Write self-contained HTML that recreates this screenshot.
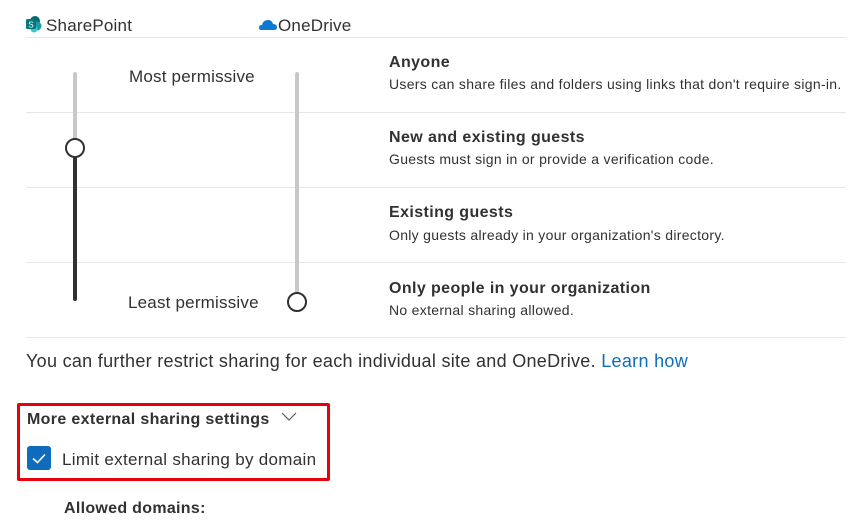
<!DOCTYPE html><html><head><style>
body{margin:0;width:860px;height:520px;background:#fff;font-family:"Liberation Sans",sans-serif;color:#323130;position:relative;overflow:hidden}
.a{position:absolute;white-space:nowrap}
.hr{position:absolute;left:26px;width:820px;height:1px;background:#e6e6e6}
.t{font-size:16px;font-weight:bold;color:#323130;letter-spacing:0.4px}
.d{font-size:14px;color:#323130;letter-spacing:0.3px}
</style></head><body>
<svg class="a" style="left:25px;top:15px" width="18" height="18" viewBox="0 0 18 18"><circle cx="10" cy="6" r="5" fill="#036c70"/><circle cx="12" cy="11" r="4.5" fill="#1a9ba1"/><circle cx="9" cy="14" r="3.5" fill="#37c6d0"/><rect x="1" y="4" width="10" height="10" rx="1.5" fill="#03787c"/><text x="6" y="12.5" font-size="8" fill="#fff" text-anchor="middle" font-family="Liberation Sans">S</text></svg>
<div class="a" style="left:46px;top:16px;font-size:17px;letter-spacing:0.2px">SharePoint</div>
<svg class="a" style="left:259px;top:19px" width="18" height="12" viewBox="0 0 18 12"><path d="M2 11 Q0 11 0 8.5 Q0 6 3 6 Q4 1 9 1 Q13 1 14 5 Q18 5 18 8.5 Q18 11 15 11Z" fill="#0f78d4"/></svg>
<div class="a" style="left:278px;top:16px;font-size:17px;letter-spacing:0.2px">OneDrive</div>
<div class="hr" style="top:37px"></div><div class="hr" style="top:112px"></div><div class="hr" style="top:187px"></div><div class="hr" style="top:262px"></div><div class="hr" style="top:337px"></div>
<div class="a" style="left:73px;top:72px;width:4px;height:76px;background:#c8c8c8;border-radius:2px"></div>
<div class="a" style="left:73px;top:148px;width:4px;height:153px;background:#323130;border-radius:2px"></div>
<div class="a" style="left:65px;top:138px;width:16px;height:16px;border:2px solid #323130;border-radius:50%;background:#fff"></div>
<div class="a" style="left:295px;top:72px;width:4px;height:230px;background:#c8c8c8;border-radius:2px"></div>
<div class="a" style="left:287px;top:292px;width:16px;height:16px;border:2px solid #323130;border-radius:50%;background:#fff"></div>
<div class="a" style="left:129px;top:67px;font-size:17px;letter-spacing:0.2px">Most permissive</div>
<div class="a" style="left:128px;top:293px;font-size:17px;letter-spacing:0.2px">Least permissive</div>
<div class="a t" style="left:389px;top:54px">Anyone</div>
<div class="a d" style="left:389px;top:76px">Users can share files and folders using links that don't require sign-in.</div>
<div class="a t" style="left:389px;top:129px">New and existing guests</div>
<div class="a d" style="left:389px;top:151px">Guests must sign in or provide a verification code.</div>
<div class="a t" style="left:389px;top:204px">Existing guests</div>
<div class="a d" style="left:389px;top:227px">Only guests already in your organization's directory.</div>
<div class="a t" style="left:389px;top:280px">Only people in your organization</div>
<div class="a d" style="left:389px;top:302px">No external sharing allowed.</div>
<div class="a" style="left:26px;top:351px;font-size:18px;letter-spacing:0.3px">You can further restrict sharing for each individual site and OneDrive. <span style="color:#0f6cbd">Learn how</span></div>
<div class="a" style="left:17px;top:403px;width:307px;height:72px;border:3px solid #e8000d;border-radius:2px"></div>
<div class="a" style="left:27px;top:411px;font-size:16px;font-weight:bold;letter-spacing:0.35px">More external sharing settings</div>
<svg class="a" style="left:281px;top:412px" width="16" height="10"><path d="M1 1 L8 8 L15 1" stroke="#605e5c" fill="none" stroke-width="1.2"/></svg>
<div class="a" style="left:27px;top:446px;width:24px;height:24px;background:#0f6cbd;border-radius:3px"></div>
<svg class="a" style="left:27px;top:446px" width="24" height="24"><path d="M6 12.5 L10.5 16.5 L18 8.5" stroke="#fff" fill="none" stroke-width="1.6"/></svg>
<div class="a" style="left:62px;top:450px;font-size:17px;letter-spacing:0.3px">Limit external sharing by domain</div>
<div class="a" style="left:64px;top:500px;font-size:16px;font-weight:bold;letter-spacing:0.3px">Allowed domains:</div>
</body></html>
